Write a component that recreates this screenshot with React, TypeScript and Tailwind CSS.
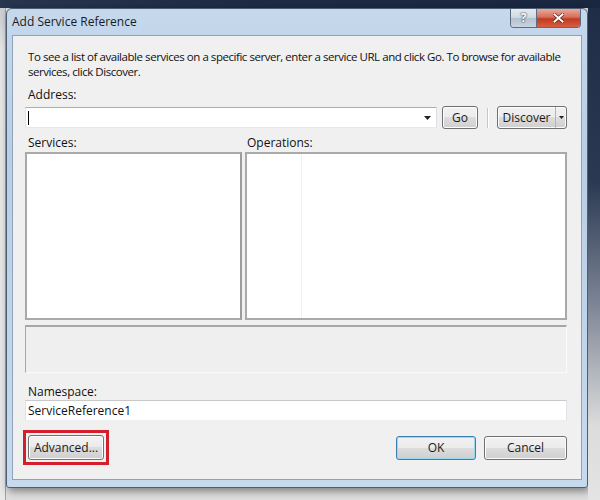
import React from "react";

const font = { fontFamily: '"Open Sans", "Noto Sans", "Liberation Sans", sans-serif' };

function Btn({ children, className = "", focused = false }: { children: React.ReactNode; className?: string; focused?: boolean }) {
  return (
    <div
      className={
        "flex items-center justify-center rounded-[3px] border text-[12px] text-[#1a1a1a] " +
        (focused
          ? "border-[#3c7fb1] shadow-[inset_0_0_0_1px_#9ad7f0] bg-[linear-gradient(to_bottom,#f2f2f2_0%,#ebebeb_50%,#dddddd_50%,#cfcfcf_100%)] "
          : "border-[#707070] shadow-[inset_0_0_0_1px_#fcfcfc] bg-[linear-gradient(to_bottom,#f2f2f2_0%,#ebebeb_50%,#dddddd_50%,#cfcfcf_100%)] ") +
        className
      }
    >
      {children}
    </div>
  );
}

export default function App() {
  return (
    <div className="w-[600px] h-[500px] overflow-hidden flex flex-col bg-[#dedede]" style={font}>
      {/* top band of background */}
      <div className="h-[8px] shrink-0 bg-[linear-gradient(to_right,#27354f_0%,#1d2b45_40%,#1a2740_100%)]" />
      <div className="flex flex-1">
        {/* left strip */}
        <div className="w-[6px] shrink-0 bg-[linear-gradient(to_bottom,#c9ccd2_0px,#e8e8e8_40px,#e8e8e8_100%)] border-r border-[#9aa4b2]" />
        {/* window */}
        <div className="w-[582px] h-[480px] shrink-0 flex flex-col rounded-t-[6px] rounded-b-[3px] border border-[#4d5d74] bg-[linear-gradient(to_bottom,#c5d8ec_0%,#b9cfe6_30%,#c7daed_100%)] shadow-[2px_3px_8px_rgba(0,0,0,0.45)]">
          {/* title bar */}
          <div className="h-[26px] shrink-0 flex items-start">
            <div className="pl-[5px] pt-[5px] text-[12px] leading-[16px] text-[#1b1b1b]">Add Service Reference</div>
            <div className="ml-auto mr-[6px] flex rounded-b-[4px] overflow-hidden border border-t-0 border-[#5d6c83] h-[19px]">
              <div className="w-[26px] flex items-center justify-center bg-[linear-gradient(to_bottom,#e4eaf1_0%,#cfd8e2_50%,#b3c0ce_50%,#c9d5e1_100%)] border-r border-[#5d6c83] text-[12px] leading-[12px] font-bold text-[#ffffff] [text-shadow:0_0_1px_#333a48,0_0_2px_#333a48]">?</div>
              <div className="w-[43px] flex items-center justify-center bg-[linear-gradient(to_bottom,#e9a99b_0%,#d5705c_45%,#c13a22_55%,#d85d3f_100%)]">
                <svg width="11" height="10" viewBox="0 0 11 10">
                  <path d="M1.5 1.5 L9.5 8.5 M9.5 1.5 L1.5 8.5" stroke="#4a1b12" strokeWidth="3.2" strokeLinecap="square" />
                  <path d="M1.5 1.5 L9.5 8.5 M9.5 1.5 L1.5 8.5" stroke="#ffffff" strokeWidth="2" strokeLinecap="square" />
                </svg>
              </div>
            </div>
          </div>
          {/* client area */}
          <div className="mx-[5px] mb-[7px] flex-1 border border-[#8ea2b8] bg-[#f0f0f0] flex flex-col pl-[12px] pr-[14px]">
            <div className="mt-[13px] pl-[3px] text-[11.5px] leading-[15px] text-[#111] tracking-[-0.45px]">
              To see a list of available services on a specific server, enter a service URL and click Go. To browse for available services, click Discover.
            </div>
            <div className="mt-[8px] pl-[3px] text-[12px] leading-[15px] text-[#111]">Address:</div>
            {/* address row */}
            <div className="mt-[4px] flex items-center h-[23px]">
              <div className="w-[414px] h-[21px] flex items-center bg-white border border-[#abadb3] border-b-[#e3e9ef] border-l-[#e2e3ea] border-r-[#dbdfe6]">
                <div className="ml-[2px] w-px h-[14px] bg-black" />
                <div className="ml-auto mr-[3px] w-[12px] flex justify-center">
                  <svg width="7" height="4" viewBox="0 0 7 4"><path d="M0 0 H7 L3.5 4 Z" fill="#222" /></svg>
                </div>
              </div>
              <Btn className="ml-[5px] w-[36px] h-[23px]">Go</Btn>
              <div className="ml-[9px] w-px h-[20px] bg-[#c8c8c8] border-r border-white box-content" />
              <div className="ml-[8px] flex h-[23px] rounded-[3px] border border-[#707070] shadow-[inset_0_0_0_1px_#fcfcfc] bg-[linear-gradient(to_bottom,#f2f2f2_0%,#ebebeb_50%,#dddddd_50%,#cfcfcf_100%)] text-[12px] text-[#1a1a1a]">
                <div className="w-[57px] flex items-center justify-center">Discover</div>
                <div className="w-[11px] flex items-center justify-center border-l border-[#b5b5b5]">
                  <svg width="5" height="3" viewBox="0 0 5 3"><path d="M0 0 H5 L2.5 3 Z" fill="#222" /></svg>
                </div>
              </div>
            </div>
            {/* labels */}
            <div className="mt-[6px] flex text-[12px] leading-[15px] text-[#111]">
              <div className="w-[222px] pl-[3px]">Services:</div>
              <div>Operations:</div>
            </div>
            {/* lists */}
            <div className="mt-[2px] flex gap-[3px] h-[168px]">
              <div className="w-[217px] bg-white border-2 border-[#a9a9a9] border-r-[#9c9c9c]" />
              <div className="flex-1 bg-white border-2 border-[#a9a9a9] flex">
                <div className="w-[55px] border-r border-[#efefef]" />
              </div>
            </div>
            {/* description */}
            <div className="mt-[5px] h-[48px] border-t-2 border-l border-[#a7a7a7] border-b border-r border-b-[#fafafa] border-r-[#fafafa] bg-[#efefef]" />
            {/* namespace */}
            <div className="mt-[11px] pl-[3px] text-[12px] leading-[15px] text-[#111]">Namespace:</div>
            <div className="mt-[1px] h-[21px] bg-white border border-[#c9c9c9] border-l-[#e2e3ea] border-r-[#e2e3ea] border-b-[#eeeeee] flex items-center pl-[2px] text-[12px] text-[#111]">
              ServiceReference1
            </div>
            {/* buttons */}
            <div className="mt-[9px] flex items-center">
              <div className="-ml-[2px] p-[2px] border-[3px] border-[#d21f2b]">
                <Btn className="w-[76px] h-[25px]">Advanced...</Btn>
              </div>
              <Btn focused className="ml-auto w-[80px] h-[24px]">OK</Btn>
              <Btn className="ml-[8px] w-[83px] h-[24px]">Cancel</Btn>
            </div>
          </div>
        </div>
        {/* right strip */}
        <div className="flex-1 bg-[linear-gradient(to_bottom,#1f2d47_0%,#2a3852_35%,#7c8595_60%,#dcdcdc_85%,#e4e4e4_100%)]" />
      </div>
    </div>
  );
}
